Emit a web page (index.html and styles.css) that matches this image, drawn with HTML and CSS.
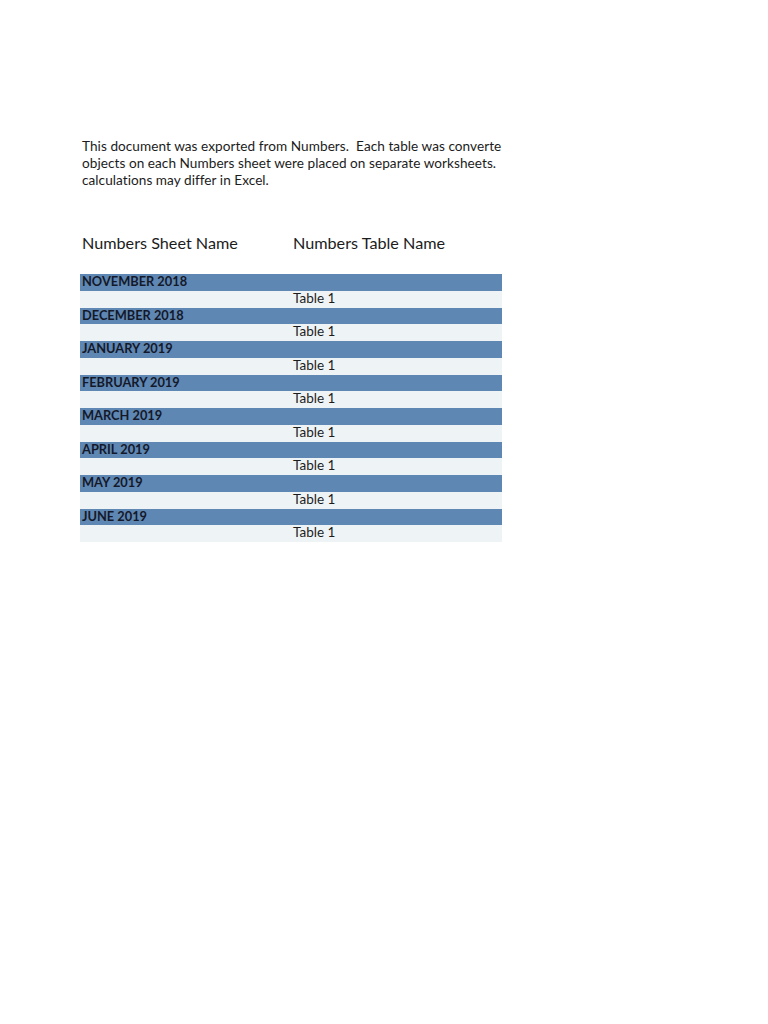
FILE: index.html
```html
<!DOCTYPE html>
<html>
<head>
<meta charset="utf-8">
<link rel="stylesheet" href="styles.css">
</head>
<body>
<div class="page">
  <div class="intro">
    <div class="line">This document was exported from Numbers.&nbsp; Each table was converte</div>
    <div class="line">objects on each Numbers sheet were placed on separate worksheets.</div>
    <div class="line">calculations may differ in Excel.</div>
  </div>
  <div class="heads">
    <div class="head c1">Numbers Sheet Name</div>
    <div class="head c2">Numbers Table Name</div>
  </div>
  <div class="table">
    <div class="sheet">NOVEMBER 2018</div><div class="tbl">Table 1</div>
    <div class="sheet">DECEMBER 2018</div><div class="tbl">Table 1</div>
    <div class="sheet">JANUARY 2019</div><div class="tbl">Table 1</div>
    <div class="sheet">FEBRUARY 2019</div><div class="tbl">Table 1</div>
    <div class="sheet">MARCH 2019</div><div class="tbl">Table 1</div>
    <div class="sheet">APRIL 2019</div><div class="tbl">Table 1</div>
    <div class="sheet">MAY 2019</div><div class="tbl">Table 1</div>
    <div class="sheet">JUNE 2019</div><div class="tbl">Table 1</div>
  </div>
</div>
</body>
</html>
```
FILE: styles.css
```css
html, body { margin: 0; padding: 0; background: #fff; }
body { font-family: "Lato", "Open Sans", sans-serif; color: #1c1c1c; }
.page { padding: 138px 0 0 80px; width: 422px; }
.intro { width: 422px; padding-left: 2px; box-sizing: border-box; }
.line { white-space: nowrap; font-size: 13.6px; line-height: 17px; letter-spacing: 0.05px; }
.heads { display: flex; margin-top: 44px; height: 41px; padding-left: 2px; }
.head { font-size: 16.2px; line-height: 20px; }
.heads .c1 { width: 211px; }
.table { display: flex; flex-direction: column; }
.sheet { background: #5f87b3; height: 16.5px; line-height: 15.5px; font-size: 12.8px; font-weight: bold; padding-left: 2px; color: #14192a; }
.tbl { background: #eef3f5; height: 17px; line-height: 15px; font-size: 13.5px; padding-left: 213px; }
```
